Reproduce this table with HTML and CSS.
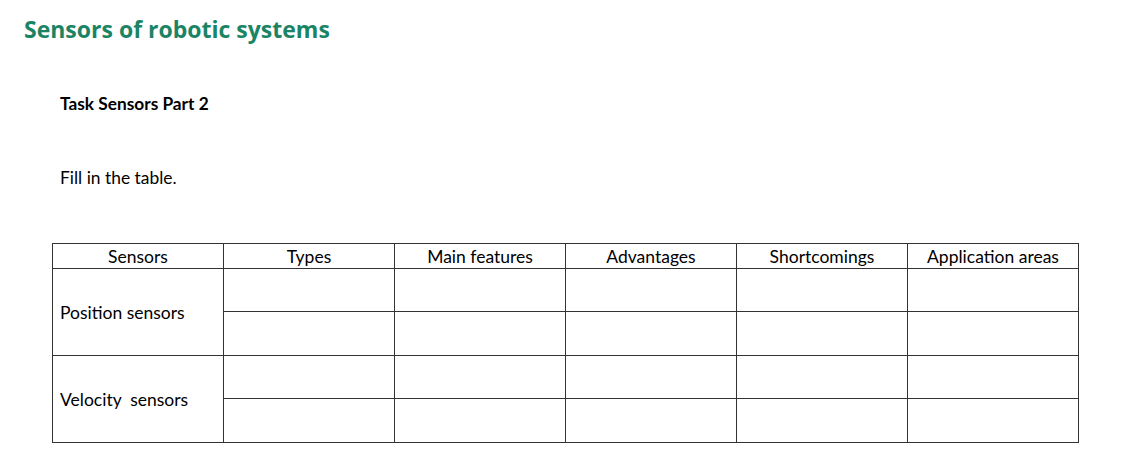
FILE: index.html
```html
<!DOCTYPE html>
<html>
<head>
<meta charset="utf-8">
<link rel="stylesheet" href="styles.css">
</head>
<body>
<h1 class="title">Sensors of robotic systems</h1>
<div class="doc">
  <p class="task">Task Sensors Part 2</p>
  <p class="fill">Fill in the table.</p>
  <table class="grid">
    <tr class="head">
      <th>Sensors</th><th>Types</th><th>Main features</th><th>Advantages</th><th>Shortcomings</th><th>Application areas</th>
    </tr>
    <tr class="row r1">
      <td rowspan="2" class="name">Position sensors</td><td></td><td></td><td></td><td></td><td></td>
    </tr>
    <tr class="row r2"><td></td><td></td><td></td><td></td><td></td></tr>
    <tr class="row r1">
      <td rowspan="2" class="name">Velocity&nbsp; sensors</td><td></td><td></td><td></td><td></td><td></td>
    </tr>
    <tr class="row r2"><td></td><td></td><td></td><td></td><td></td></tr>
  </table>
</div>
</body>
</html>
```
FILE: styles.css
```css
html, body {
  margin: 0;
  padding: 0;
  background: #ffffff;
}
body {
  font-family: "Lato", "Open Sans", sans-serif;
  color: #000;
}
.title {
  margin: 0;
  padding: 14px 0 0 24px;
  font-family: "Open Sans", sans-serif;
  font-weight: 700;
  font-size: 23px;
  line-height: 30px;
  color: #1b8464;
}
.doc {
  padding-left: 52px;
}
.task {
  margin: 0;
  padding: 50px 0 0 8px;
  font-family: "Lato", sans-serif;
  font-weight: 700;
  font-size: 17.3px;
  line-height: 20px;
}
.fill {
  margin: 0;
  padding: 54px 0 0 8px;
  font-family: "Lato", sans-serif;
  font-size: 17.4px;
  line-height: 20px;
}
.grid {
  margin-top: 55px;
  border-collapse: collapse;
  font-family: "Lato", sans-serif;
  font-size: 17.5px;
}
.grid th, .grid td {
  border: 1px solid #333;
  width: 170px;
  padding: 0;
}
.grid th {
  font-weight: 400;
  height: 22px;
  line-height: 22px;
  padding-top: 2px;
  text-align: center;
}
.grid .r1 td {
  height: 42px;
}
.grid .r2 td {
  height: 43px;
}
.grid td.name {
  text-align: left;
  padding-left: 7px;
  width: 163px;
}
```
